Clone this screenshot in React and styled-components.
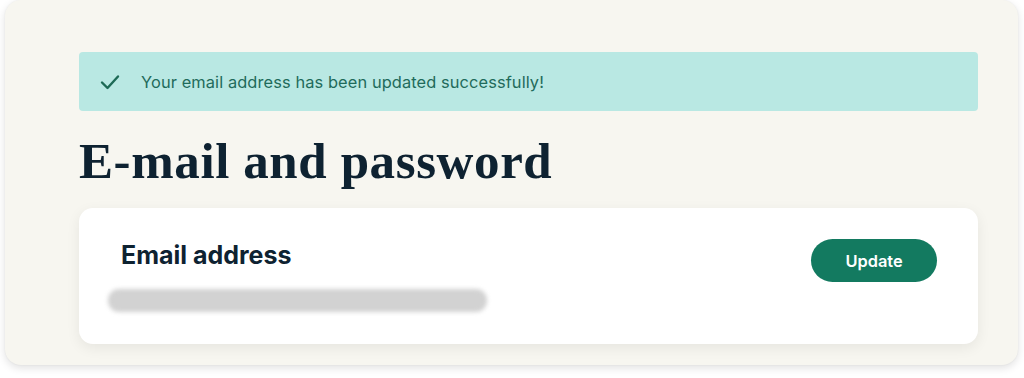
import React from "react";
import styled, { createGlobalStyle } from "styled-components";

const Global = createGlobalStyle`
  html, body { margin: 0; padding: 0; background: #ffffff; }
  body { font-family: Inter, "Noto Sans", sans-serif; }
`;

const Page = styled.div`
  width: 1024px;
  height: 378px;
  overflow: hidden;
  padding: 0 6px 0 5px;
  box-sizing: border-box;
`;

const Panel = styled.section`
  height: 365px;
  box-sizing: border-box;
  background: #f7f6f0;
  border-radius: 16px;
  box-shadow: 0 3px 8px rgba(0, 0, 0, 0.12), 0 0 2px rgba(0, 0, 0, 0.06);
  padding: 52px 40px 0 74px;
  display: flex;
  flex-direction: column;
`;

const Banner = styled.div`
  height: 59px;
  box-sizing: border-box;
  background: #b9e8e3;
  border-radius: 4px;
  display: flex;
  align-items: center;
  gap: 21px;
  padding: 0 0 0 21px;
  color: #1f6b5b;
  font-size: 16.4px;
  letter-spacing: 0.1px;
`;

const Heading = styled.h1`
  margin: 22px 0 0 0;
  font-family: "Liberation Serif", "DejaVu Serif", serif;
  font-weight: 700;
  font-size: 51px;
  line-height: 56px;
  color: #0e2231;
  letter-spacing: 0.6px;
`;

const Card = styled.div`
  margin-top: 19px;
  height: 136px;
  box-sizing: border-box;
  background: #ffffff;
  border-radius: 14px;
  box-shadow: 0 4px 14px rgba(0, 0, 0, 0.07);
  display: flex;
  justify-content: space-between;
  align-items: flex-start;
  padding: 31px 41px 0 42px;
`;

const Info = styled.div`
  display: flex;
  flex-direction: column;
`;

const Label = styled.div`
  font-family: Inter, sans-serif;
  font-weight: 700;
  font-size: 25px;
  line-height: 32px;
  color: #0e2231;
`;

const Redacted = styled.div`
  margin: 18px 0 0 -13px;
  width: 379px;
  height: 23px;
  border-radius: 11px;
  background: #d2d2d2;
  filter: blur(2px);
`;

const Button = styled.button`
  margin-top: 0;
  width: 126px;
  height: 43px;
  border: none;
  border-radius: 22px;
  background: #137a60;
  color: #ffffff;
  font-family: Inter, sans-serif;
  font-weight: 600;
  font-size: 16.4px;
  cursor: pointer;
`;

export default function App() {
  return (
    <>
      <Global />
      <Page>
        <Panel>
          <Banner>
            <svg width="20" height="16" viewBox="0 0 20 16" fill="none">
              <path d="M2 8.5 L7.5 14 L18 2.5" stroke="#1d6a56" strokeWidth="2.4" strokeLinecap="round" strokeLinejoin="round" />
            </svg>
            <span>Your email address has been updated successfully!</span>
          </Banner>
          <Heading>E-mail and password</Heading>
          <Card>
            <Info>
              <Label>Email address</Label>
              <Redacted />
            </Info>
            <Button>Update</Button>
          </Card>
        </Panel>
      </Page>
    </>
  );
}
